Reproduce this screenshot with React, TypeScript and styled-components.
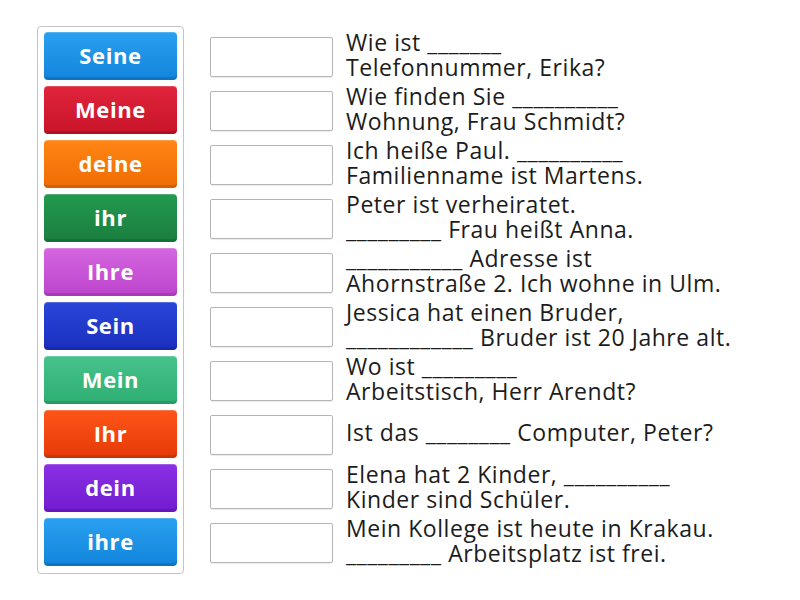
import React from 'react';
import styled, { createGlobalStyle } from 'styled-components';

const GlobalStyle = createGlobalStyle`
	html, body {
		margin: 0;
		padding: 0;
		background: #ffffff;
		font-family: 'Open Sans', 'Liberation Sans', sans-serif;
	}
`;

const tileColors: Record<string, [string, string]> = {
	blue: ['#2aa0ef', '#1185dc'],
	red: ['#e0243b', '#c8142a'],
	orange: ['#ff8513', '#ef6d05'],
	green: ['#22994f', '#1b7e40'],
	pink: ['#d466e0', '#bd43cc'],
	navy: ['#2a46d8', '#1a2fbf'],
	teal: ['#45c38a', '#2fae74'],
	tomato: ['#ff5418', '#e53a06'],
	purple: ['#8a30e4', '#711bd0'],
};

type TileColor = keyof typeof tileColors;

const tiles: { label: string; color: TileColor }[] = [
	{ label: 'Seine', color: 'blue' },
	{ label: 'Meine', color: 'red' },
	{ label: 'deine', color: 'orange' },
	{ label: 'ihr', color: 'green' },
	{ label: 'Ihre', color: 'pink' },
	{ label: 'Sein', color: 'navy' },
	{ label: 'Mein', color: 'teal' },
	{ label: 'Ihr', color: 'tomato' },
	{ label: 'dein', color: 'purple' },
	{ label: 'ihre', color: 'blue' },
];

const sentences: string[][] = [
	['Wie ist _______', 'Telefonnummer, Erika?'],
	['Wie finden Sie __________', 'Wohnung, Frau Schmidt?'],
	['Ich heiße Paul. __________', 'Familienname ist Martens.'],
	['Peter ist verheiratet.', '_________ Frau heißt Anna.'],
	['___________ Adresse ist', 'Ahornstraße 2. Ich wohne in Ulm.'],
	['Jessica hat einen Bruder,', '____________ Bruder ist 20 Jahre alt.'],
	['Wo ist _________', 'Arbeitstisch, Herr Arendt?'],
	['Ist das ________ Computer, Peter?'],
	['Elena hat 2 Kinder, __________', 'Kinder sind Schüler.'],
	['Mein Kollege ist heute in Krakau.', '_________ Arbeitsplatz ist frei.'],
];

export default function App() {
	return (
		<>
			<GlobalStyle />
			<Page>
				<TilePanel>
					{tiles.map((tile, i) => (
						<Tile key={i} color={tile.color}>
							{tile.label}
						</Tile>
					))}
				</TilePanel>
				<Rows>
					{sentences.map((lines, i) => (
						<Row key={i}>
							<DropBox />
							<Sentence>
								{lines.map((line, j) => (
									<Line key={j}>{line}</Line>
								))}
							</Sentence>
						</Row>
					))}
				</Rows>
			</Page>
		</>
	);
}

const Page = styled.div`
	display: flex;
	align-items: flex-start;
	padding: 26px 0 0 37px;
`;

const TilePanel = styled.div`
	width: 133px;
	padding: 5px 6px 7px 6px;
	border: 1px solid #c4c4c4;
	border-radius: 4px;
	display: flex;
	flex-direction: column;
	gap: 6px;
`;

const Tile = styled.div<{ color: TileColor }>`
	height: 48px;
	padding-bottom: 3px;
	box-sizing: border-box;
	border-radius: 4px;
	display: flex;
	align-items: center;
	justify-content: center;
	color: #ffffff;
	font-size: 22px;
	letter-spacing: 0.6px;
	font-weight: 700;
	background: linear-gradient(
		to bottom,
		${(p) => tileColors[p.color][0]},
		${(p) => tileColors[p.color][1]}
	);
	box-shadow: inset 0 -3px 0 rgba(0, 0, 0, 0.12), inset 0 1px 0 rgba(255, 255, 255, 0.2);
`;

const Rows = styled.div`
	display: flex;
	flex-direction: column;
	margin-left: 26px;
	padding-top: 4px;
`;

const Row = styled.div`
	height: 54px;
	display: flex;
	align-items: center;
	gap: 13px;
`;

const DropBox = styled.div`
	width: 121px;
	height: 38px;
	border: 1px solid #b5b5b5;
	border-radius: 2px;
	box-shadow: 0 1px 1px rgba(0, 0, 0, 0.08);
	flex-shrink: 0;
`;

const Sentence = styled.div`
	display: flex;
	flex-direction: column;
	font-size: 23px;
	letter-spacing: 0.55px;
	color: #1c1c1c;
	white-space: nowrap;
	margin-top: -5px;
`;

const Line = styled.div`
	height: 25px;
	line-height: 25px;
`;
